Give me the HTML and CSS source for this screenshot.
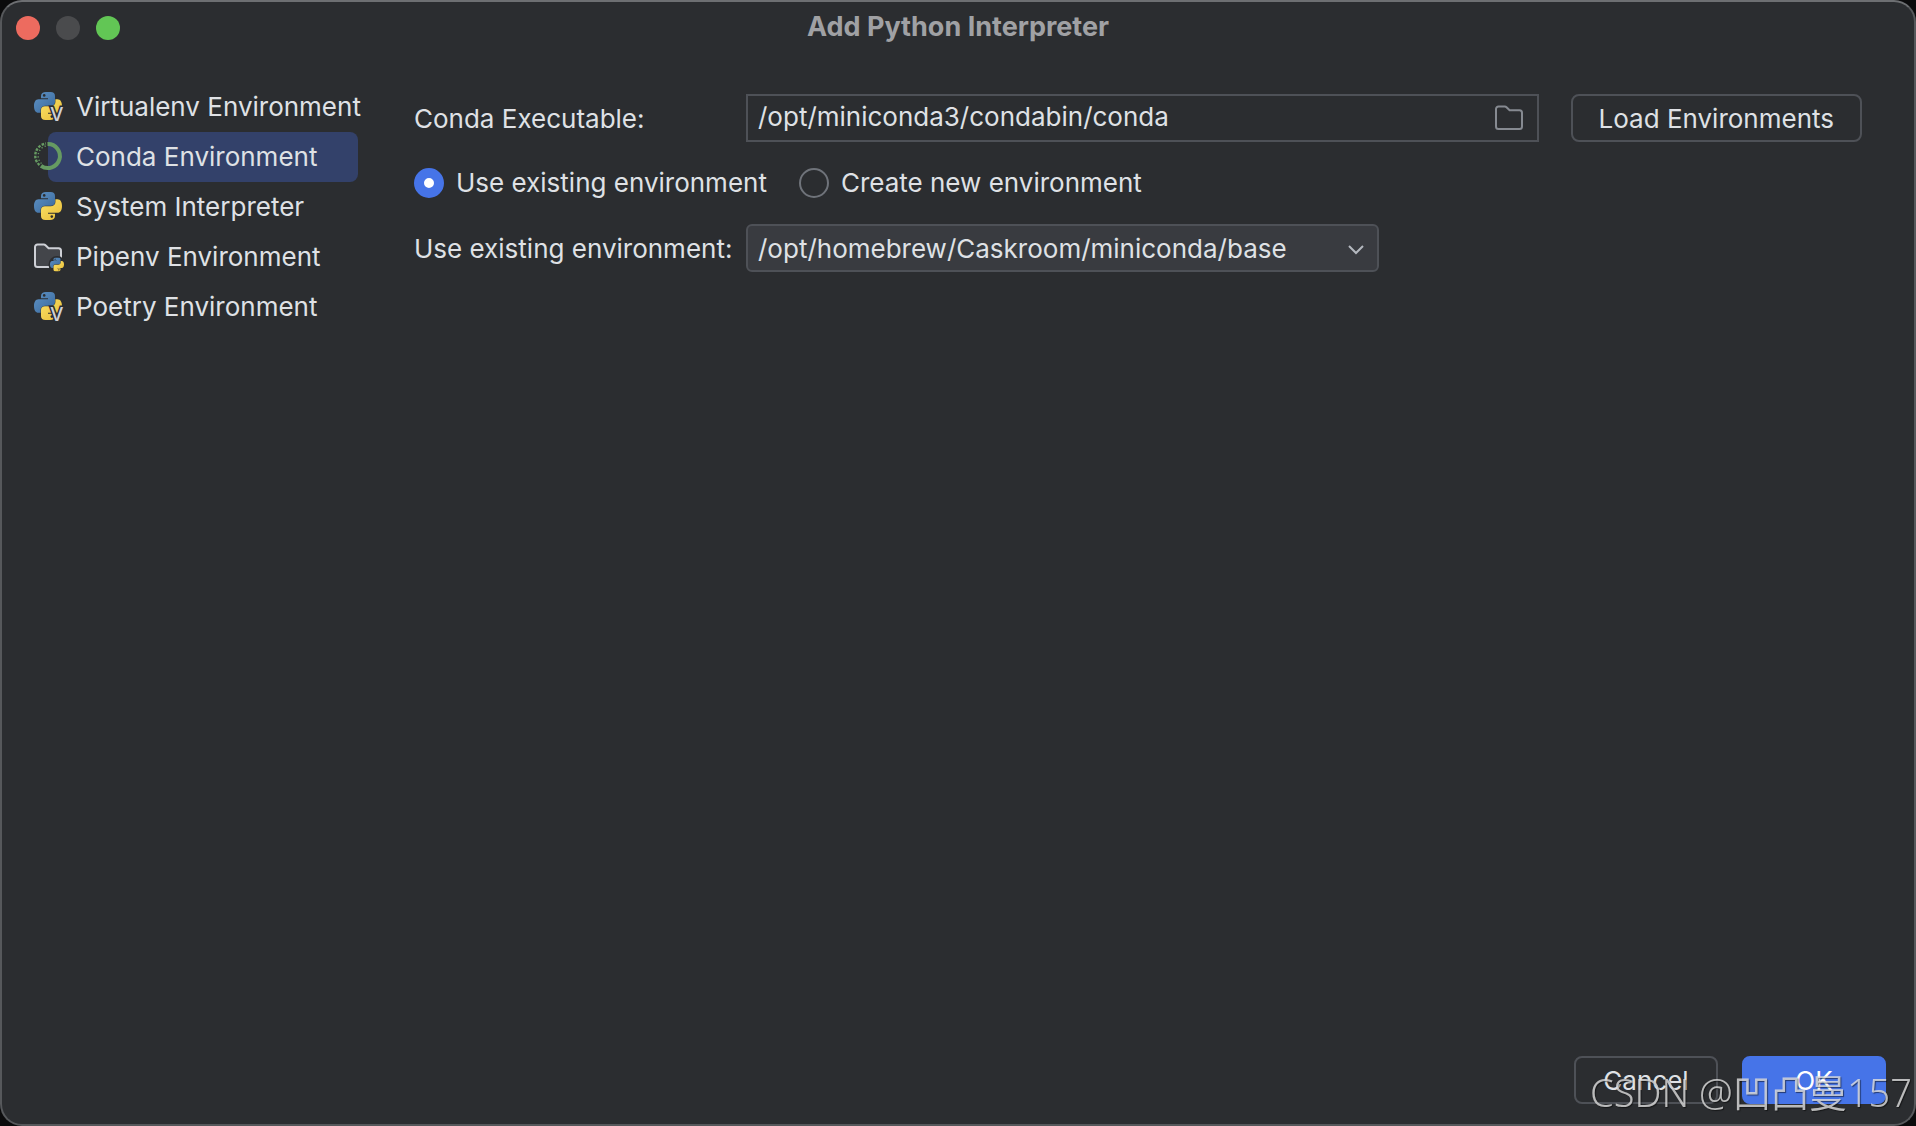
FILE: index.html
```
<!DOCTYPE html>
<html lang="en">
  <head>
    <meta charset="UTF-8" />
    <meta name="viewport" content="width=device-width, initial-scale=1.0" />
    <title>Add Python Interpreter</title>
    <link rel="stylesheet" href="styles.css">
  </head>
  <body>
    <!-- Shared icon shapes -->
    <svg class="defs" aria-hidden="true">
      <defs>
        <linearGradient id="blue" x1="0" y1="0" x2="1" y2="1">
          <stop offset="0" stop-color="#5e93c6" />
          <stop offset="1" stop-color="#3a689a" />
        </linearGradient>
        <linearGradient id="yellow" x1="0" y1="0" x2="1" y2="1">
          <stop offset="0" stop-color="#e8bd38" />
          <stop offset="1" stop-color="#fbe267" />
        </linearGradient>
        <path id="snake" d="M7 4C7 1.5 9 0 12 0h4.500C19.500 0 21 1.500 21 4v6c0 2.500-1.500 3.700-4 3.700h-5.500C8.500 13.700 6.600 15.500 6.600 18v2.800H4.500C1.500 20.800 0 18 0 14s1.500-6.800 4.500-6.800H14v-.9H7z" />
        <symbol id="python" viewBox="0 0 28 28">
          <use href="#snake" fill="url(#blue)" />
          <use href="#snake" fill="url(#yellow)" transform="rotate(180 14 14)" />
          <circle cx="10.200" cy="3.400" r="1.300" fill="#2b2d30" />
          <circle cx="17.800" cy="24.600" r="1.300" fill="#2b2d30" />
        </symbol>
      </defs>
    </svg>

    <div class="window">
      <header class="titlebar">
        <div class="lights">
          <button class="light close" aria-label="Close"></button>
          <button class="light minimize" aria-label="Minimize" disabled></button>
          <button class="light zoom" aria-label="Zoom"></button>
        </div>
        <h1 class="title">Add Python Interpreter</h1>
      </header>

      <div class="main">
        <nav class="sidebar">
          <a class="env" href="#virtualenv">
            <svg class="env-icon" viewBox="0 0 28 28">
              <use href="#python" width="28" height="28" />
              <text class="badge" x="16" y="29">V</text>
            </svg>
            Virtualenv Environment
          </a>
          <a class="env selected" href="#conda" aria-current="page">
            <svg class="env-icon" viewBox="0 0 28 28">
              <path d="M13.500 2A12 12 0 1 1 7 23.800" fill="none" stroke="#669b62" stroke-width="4" />
              <g fill="none" stroke="#669b62">
                <path d="M5.500 23A12.300 12.300 0 0 1 12 1.500" stroke-width="2.400" stroke-dasharray="2.600 1.300" />
                <path d="M7.500 21.500A10.300 10.300 0 0 1 12.500 3.800" stroke-width="1.400" stroke-dasharray="1.200 2.200" />
              </g>
            </svg>
            Conda Environment
          </a>
          <a class="env" href="#system">
            <svg class="env-icon" viewBox="0 0 28 28">
              <use href="#python" width="28" height="28" />
            </svg>
            System Interpreter
          </a>
          <a class="env" href="#pipenv">
            <svg class="env-icon" viewBox="0 0 28 28">
              <path d="M1 5a2.500 2.500 0 0 1 2.500-2.500h6.300c.7 0 1.200.2 1.700.7l3.100 3.100h10A2.500 2.500 0 0 1 27 8.800v13.700a2.500 2.500 0 0 1-2.500 2.500h-21A2.500 2.500 0 0 1 1 22.500z" fill="#43454a" stroke="#ced0d6" stroke-width="2" />
              <circle cx="23" cy="22.500" r="8.500" fill="#2b2d30" />
              <use href="#python" x="16" y="15.500" width="14" height="14" />
            </svg>
            Pipenv Environment
          </a>
          <a class="env" href="#poetry">
            <svg class="env-icon" viewBox="0 0 28 28">
              <use href="#python" width="28" height="28" />
              <text class="badge" x="16" y="29">V</text>
            </svg>
            Poetry Environment
          </a>
        </nav>

        <form class="settings" id="settings">
          <div class="row">
            <label class="label" for="executable">Conda Executable:</label>
            <div class="path-field">
              <input class="path-input" id="executable" type="text" value="/opt/miniconda3/condabin/conda" />
              <button class="browse" type="button" aria-label="Browse">
                <svg class="folder" viewBox="0 0 28 28">
                  <path d="M1 5a2.500 2.500 0 0 1 2.500-2.500h6.300c.7 0 1.200.2 1.700.7l3.100 3.100h10A2.500 2.500 0 0 1 27 8.800v13.700a2.500 2.500 0 0 1-2.500 2.500h-21A2.500 2.500 0 0 1 1 22.500z" />
                </svg>
              </button>
            </div>
            <button class="btn load" type="button">Load Environments</button>
          </div>

          <div class="radios">
            <label class="radio"><input type="radio" name="mode" checked /> Use existing environment</label>
            <label class="radio"><input type="radio" name="mode" /> Create new environment</label>
          </div>

          <div class="row">
            <label class="label" for="environment">Use existing environment:</label>
            <div class="select-field">
              <select class="select" id="environment">
                <option>/opt/homebrew/Caskroom/miniconda/base</option>
              </select>
              <svg class="chevron" viewBox="0 0 16 10">
                <path d="M1 1l7 7 7-7" />
              </svg>
            </div>
          </div>
        </form>
      </div>

      <footer class="actions">
        <button class="btn action" type="button">Cancel</button>
        <button class="btn action primary" type="submit" form="settings">OK</button>
      </footer>
    </div>

    <div class="watermark">CSDN @凹凸曼157</div>
  </body>
</html>
```
FILE: styles.css
```
/* Theme */
:root {
  --window: #2b2d30;
  --border: #4e5157;
  --text: #dfe1e5;
  --muted: #a0a1a4;
  --field: #393b40;
  --selection: #33416a;
  --accent: #4674e8;
}

* {
  box-sizing: border-box;
  margin: 0;
  padding: 0;
}
body {
  background: #0b0b0c;
  color: var(--text);
  font-family: Inter, "Noto Sans", sans-serif;
  font-size: 26px;
  line-height: 32px;
}
button,
input,
select {
  font: inherit;
  color: inherit;
}
.defs {
  position: absolute;
  width: 0;
  height: 0;
}

/* Window */
.window {
  display: flex;
  flex-direction: column;
  min-height: 100vh;
  background: var(--window);
  border: 2px solid #56585b;
  border-top-color: #6d6f72;
  border-radius: 22px;
}

/* Title bar */
.titlebar {
  display: grid;
  grid-template-columns: 1fr auto 1fr;
  align-items: center;
  height: 52px;
  padding: 0 14px;
}
.lights {
  display: flex;
  gap: 16px;
}
.light {
  width: 24px;
  height: 24px;
  border: none;
  border-radius: 50%;
}
.close {
  background: #ed6b5f;
}
.minimize {
  background: #4a4b4d;
}
.zoom {
  background: #62c655;
}
.title {
  padding-bottom: 2px;
  color: var(--muted);
  font-size: 27px;
  font-weight: 700;
}

.main {
  display: flex;
  flex: 1;
  padding: 28px 52px 0 46px;
}

/* Environment list */
.sidebar {
  flex: none;
  width: 310px;
  margin-right: 56px;
}
.env {
  display: flex;
  align-items: center;
  gap: 14px;
  height: 50px;
  border-radius: 8px;
  color: var(--text);
  text-decoration: none;
  white-space: nowrap;
}
.selected {
  background: var(--selection);
}
/* The icon hangs out over the left edge of the selection */
.env-icon {
  flex: none;
  width: 28px;
  height: 28px;
  margin: 0 0 2px -14px;
  overflow: visible;
}
.badge {
  font-size: 19px;
  font-weight: 500;
  fill: #ced0d6;
  stroke: var(--window);
  stroke-width: 3px;
  paint-order: stroke;
}

/* Form */
.settings {
  flex: 1;
  padding-top: 12px;
}
.row {
  display: flex;
  align-items: center;
}
.label {
  flex: none;
  width: 332px;
  padding-top: 2px;
}
.path-field {
  display: flex;
  flex: 1;
  height: 48px;
  border: 2px solid var(--border);
}
.path-input {
  flex: 1;
  min-width: 0;
  padding: 0 0 2px 10px;
  background: none;
  border: none;
  outline: none;
}
.browse {
  display: flex;
  align-items: center;
  padding: 0 14px;
  background: none;
  border: none;
}
.folder {
  width: 28px;
  height: 28px;
  fill: none;
  stroke: #868a91;
  stroke-width: 2;
}
.btn {
  height: 48px;
  padding-top: 2px;
  background: none;
  border: 2px solid var(--border);
  border-radius: 8px;
}
.load {
  margin-left: 32px;
  padding: 2px 26px 0;
}

.radios {
  display: flex;
  gap: 32px;
  padding: 25px 0;
}
.radio {
  display: flex;
  align-items: center;
  gap: 12px;
}
.radio input {
  appearance: none;
  width: 30px;
  height: 30px;
  border: 2px solid #6f737a;
  border-radius: 50%;
}
.radio input:checked {
  background: #fff;
  border: 10px solid var(--accent);
}

.select-field {
  display: grid;
  align-items: center;
}
.select,
.chevron {
  grid-area: 1 / 1;
}
.select {
  appearance: none;
  height: 48px;
  padding: 2px 90px 0 10px;
  background: var(--field);
  border: 2px solid var(--border);
  border-radius: 6px;
}
.chevron {
  justify-self: end;
  width: 16px;
  height: 10px;
  margin: 4px 15px 0 0;
  fill: none;
  stroke: #b4b8bf;
  stroke-width: 2;
  pointer-events: none;
}

/* Footer */
.actions {
  display: flex;
  justify-content: flex-end;
  gap: 24px;
  padding: 0 28px 20px;
}
.action {
  width: 144px;
}
.primary {
  background: var(--accent);
  border-color: var(--accent);
  color: #fff;
}

/* Watermark laid over the bottom corner */
.watermark {
  position: fixed;
  right: 4px;
  bottom: 10px;
  color: rgba(225, 225, 225, 0.8);
  font-family: "Noto Sans", "Noto Sans CJK SC", sans-serif;
  font-size: 38px;
  font-weight: 350;
  line-height: 48px;
  text-shadow: 1px 1px 1px rgba(0, 0, 0, 0.5);
  pointer-events: none;
}
```
